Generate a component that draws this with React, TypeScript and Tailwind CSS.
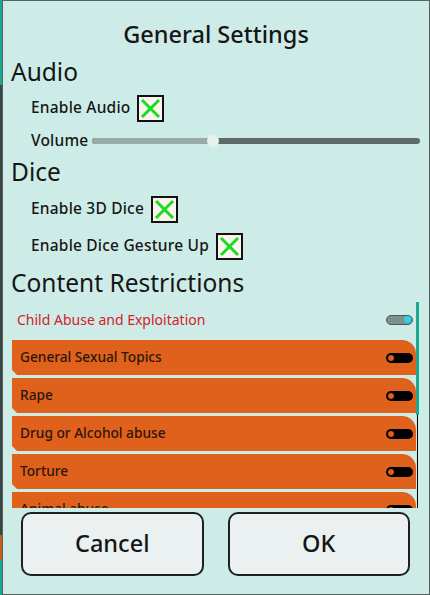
import React from "react";

const topics = [
  "General Sexual Topics",
  "Rape",
  "Drug or Alcohol abuse",
  "Torture",
  "Animal abuse",
];

function CheckBox() {
  return (
    <div className="ml-[7px] flex h-[27px] w-[27px] items-center justify-center border-2 border-[#111] bg-[#fcf3ee]">
      <svg width="21" height="21" viewBox="0 0 21 21">
        <path d="M2 2 L19 19 M19 2 L2 19" stroke="#14df1e" strokeWidth="3" />
      </svg>
    </div>
  );
}

function Toggle({ on }: { on?: boolean }) {
  if (on) {
    return (
      <div className="flex h-[10px] w-[27px] items-center justify-end rounded-full border border-[#4d5958] bg-[#7e8e8b] pr-[1px]">
        <div className="h-[7px] w-[7px] rounded-full bg-[#20d8f2]" />
      </div>
    );
  }
  return (
    <div className="flex h-[10px] w-[27px] items-center rounded-full bg-black pl-[1px]">
      <div className="h-[8px] w-[8px] rounded-full border border-black bg-[#e0611c]" />
    </div>
  );
}

export default function App() {
  return (
    <div
      className="flex h-[595px] w-[430px] overflow-hidden"
      style={{ fontFamily: '"Noto Sans", "Open Sans", sans-serif' }}
    >
      <div className="flex w-[2px] flex-col">
        <div className="h-[85px] bg-[#1aa890]" />
        <div className="h-[450px] bg-[#3a4442]" />
        <div className="h-[25px] bg-[#c8601e]" />
        <div className="flex-1 bg-[#1aa890]" />
      </div>
      <div className="flex flex-1 flex-col border border-[#55625f] bg-[#ceece7] text-[#161616]">
        <h1 className="mt-[18px] h-[30px] text-center text-[23.5px] leading-[30px] font-medium">
          General Settings
        </h1>

        <h2 className="mt-[7px] h-[32px] pl-[8px] text-[24.5px] leading-[32px]">Audio</h2>
        <div className="mt-[5px] flex h-[30px] items-center pl-[28px] text-[15.5px] font-medium tracking-[0.2px]">
          <span>Enable Audio</span>
          <CheckBox />
        </div>
        <div className="mt-[8px] flex h-[20px] items-center pl-[28px] text-[15.5px] font-medium tracking-[0.2px]">
          <span>Volume</span>
          <div className="relative ml-[4px] mr-[9px] flex h-[6px] flex-1 rounded-full bg-[#5d6c69]">
            <div className="h-full w-[120px] rounded-l-full bg-[#9aaaa7]" />
            <div className="absolute top-[-3px] left-[115px] h-[12px] w-[12px] rounded-full bg-[#e9f1ef]" />
          </div>
        </div>

        <h2 className="mt-[5px] h-[32px] pl-[8px] text-[24.5px] leading-[32px]">Dice</h2>
        <div className="mt-[6px] flex h-[30px] items-center pl-[28px] text-[15.5px] font-medium tracking-[0.2px]">
          <span>Enable 3D Dice</span>
          <CheckBox />
        </div>
        <div className="mt-[7px] flex h-[30px] items-center pl-[28px] text-[15.5px] font-medium tracking-[0.2px]">
          <span>Enable Dice Gesture Up</span>
          <CheckBox />
        </div>

        <h2 className="mt-[6px] h-[32px] pl-[8px] text-[24.5px] leading-[32px]">
          Content Restrictions
        </h2>

        <div className="mt-[3px] ml-[9px] mr-[10px] flex h-[206px] overflow-hidden">
          <div className="flex flex-1 flex-col gap-[3px]">
            <div className="flex h-[35px] shrink-0 items-center justify-between pr-[3px] pl-[5px]">
              <span className="text-[14px] text-[#d3202b]">Child Abuse and Exploitation</span>
              <Toggle on />
            </div>
            {topics.map((t) => (
              <div
                key={t}
                className="flex h-[35px] shrink-0 items-center justify-between rounded-tr-[14px] bg-[#e0611c] pr-[3px] pl-[8px] [clip-path:polygon(0_0,100%_0,100%_100%,5px_100%,0_calc(100%-5px))]"
              >
                <span className="text-[13.7px] font-medium text-[#2a160a]">{t}</span>
                <Toggle />
              </div>
            ))}
          </div>
          <div className="flex w-[3px] flex-col">
            <div className="h-[113px] bg-[#1bab93]" />
            <div className="ml-[1px] w-[1px] flex-1 bg-black" />
          </div>
        </div>

        <div className="mt-[4px] flex gap-[24px] pr-[19px] pl-[18px]">
          <button className="flex h-[64px] flex-1 items-center justify-center rounded-[10px] border-2 border-[#1f1f1f] bg-[#ebf1f0] text-[23.5px] font-medium text-[#161616]">
            Cancel
          </button>
          <button className="flex h-[64px] flex-1 items-center justify-center rounded-[10px] border-2 border-[#1f1f1f] bg-[#ebf1f0] text-[23.5px] font-medium text-[#161616]">
            OK
          </button>
        </div>
      </div>
    </div>
  );
}
